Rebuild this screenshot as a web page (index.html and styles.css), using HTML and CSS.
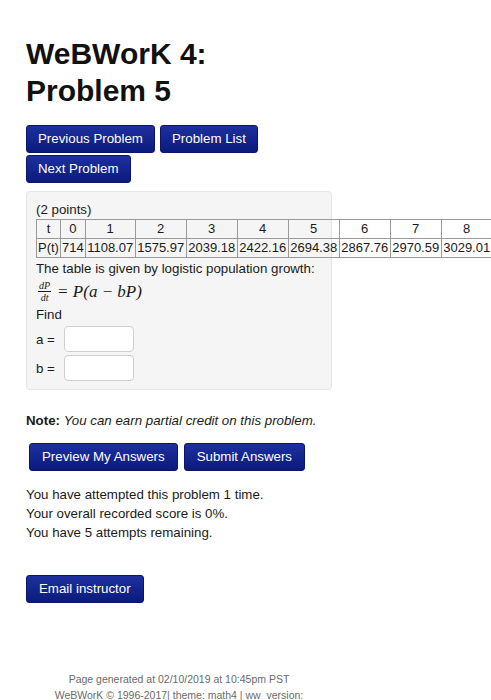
FILE: index.html
```html
<!DOCTYPE html>
<html>
<head>
<meta charset="utf-8">
<title>WeBWorK 4: Problem 5</title>
<link rel="stylesheet" href="styles.css">
</head>
<body>
<div class="page">
  <h1 class="title">WeBWorK 4:<br>Problem 5</h1>
  <div class="nav">
    <button class="btn">Previous Problem</button>
    <button class="btn">Problem List</button>
    <button class="btn">Next Problem</button>
  </div>
  <div class="problem">
    <div class="line">(2 points)</div>
    <table class="data">
      <tr><td>t</td><td>0</td><td>1</td><td>2</td><td>3</td><td>4</td><td>5</td><td>6</td><td>7</td><td>8</td></tr>
      <tr><td>P(t)</td><td>714</td><td>1108.07</td><td>1575.97</td><td>2039.18</td><td>2422.16</td><td>2694.38</td><td>2867.76</td><td>2970.59</td><td>3029.01</td></tr>
    </table>
    <div class="line">The table is given by logistic population growth:</div>
    <div class="eq">
      <span class="frac"><span class="num">dP</span><span class="den">dt</span></span>
      <span class="rhs">= P(a − bP)</span>
    </div>
    <div class="line">Find</div>
    <div class="ans"><span class="lbl">a =</span><span class="input"></span></div>
    <div class="ans"><span class="lbl">b =</span><span class="input"></span></div>
  </div>
  <p class="note"><b>Note:</b> <i>You can earn partial credit on this problem.</i></p>
  <div class="submit">
    <button class="btn">Preview My Answers</button>
    <button class="btn">Submit Answers</button>
  </div>
  <div class="attempts">
    <div>You have attempted this problem 1 time.</div>
    <div>Your overall recorded score is 0%.</div>
    <div>You have 5 attempts remaining.</div>
  </div>
  <div class="email"><button class="btn">Email instructor</button></div>
  <div class="footer">
    <div>Page generated at 02/10/2019 at 10:45pm PST</div>
    <div>WeBWorK © 1996-2017| theme: math4 | ww_version:</div>
  </div>
</div>
</body>
</html>
```
FILE: styles.css
```css
html, body {
  margin: 0;
  padding: 0;
  background: #ffffff;
}
body {
  font-family: "Liberation Sans", Arial, sans-serif;
  font-size: 13.3px;
  color: #1a1a1a;
}
.page {
  width: 306px;
  margin-left: 26px;
}
.title {
  margin: 35px 0 16px;
  font-size: 30px;
  line-height: 37px;
  font-weight: bold;
  color: #111;
}
.btn {
  font-family: "Liberation Sans", Arial, sans-serif;
  font-size: 13.3px;
  color: #fff;
  height: 28px;
  padding: 0 11px;
  border: 1px solid #0a156b;
  border-radius: 3px;
  background: linear-gradient(#1d309e, #0b1a7c);
  line-height: 26px;
  white-space: nowrap;
  margin: 0;
}
.nav {
  display: flex;
  flex-wrap: wrap;
  gap: 2px 5px;
}
.problem {
  margin-top: 8px;
  background: #f5f5f5;
  border: 1px solid #e5e5e5;
  border-radius: 4px;
  padding: 8px 9px 8px;
}
.line {
  line-height: 19px;
}
.data {
  border-collapse: collapse;
  white-space: nowrap;
  margin-bottom: 1px;
}
.data td {
  border: 1px solid #9a9a9a;
  padding: 0 1.5px;
  height: 18px;
  line-height: 18px;
  text-align: center;
  font-size: 13px;
}
.data td:first-child,
.data td:nth-child(2) { padding: 0 1px; }
.eq {
  display: flex;
  align-items: center;
  height: 27px;
  font-family: "Liberation Serif", "Times New Roman", serif;
  font-style: italic;
}
.frac {
  display: inline-flex;
  flex-direction: column;
  align-items: center;
  font-size: 10px;
  line-height: 11px;
  margin: 0 6px 0 2px;
}
.num {
  border-bottom: 1px solid #1a1a1a;
  padding: 0 1px;
}
.den { padding: 0 1px; }
.rhs {
  font-size: 17px;
}
.ans {
  display: flex;
  align-items: center;
  margin-top: 2px;
}
.ans + .ans { margin-top: 3px; }
.lbl {
  width: 28px;
}
.input {
  display: block;
  width: 70px;
  height: 26px;
  box-sizing: border-box;
  background: #fff;
  border: 1px solid #cfcfcf;
  border-radius: 4px;
}
.note {
  margin: 21px 0 0;
  line-height: 20px;
}
.submit {
  display: flex;
  gap: 6px;
  margin: 12px 0 0 3px;
}
.submit .btn {
  padding: 0 12px;
}
.attempts {
  margin-top: 14px;
  line-height: 19px;
}
.email {
  margin-top: 33px;
}
.email .btn {
  padding: 0 12px;
}
.footer {
  margin-top: 68px;
  text-align: center;
  font-size: 10.5px;
  line-height: 16px;
  color: #6b6b6b;
}
```
